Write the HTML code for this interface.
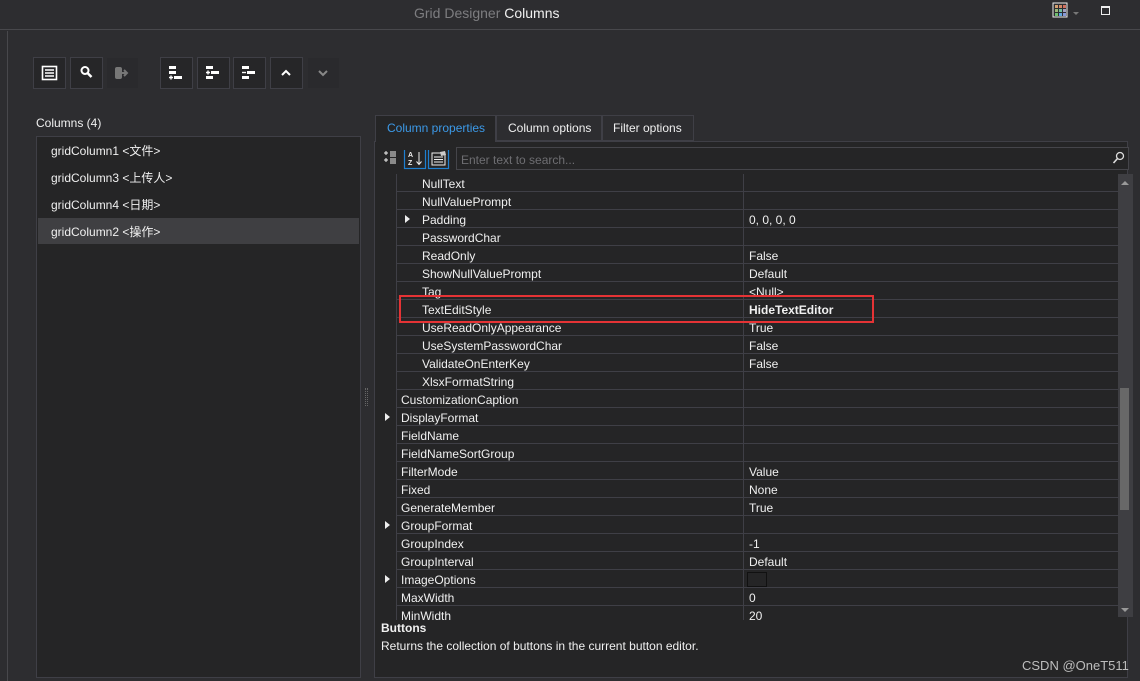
<!DOCTYPE html>
<html><head><meta charset="utf-8"><style>
*{margin:0;padding:0;box-sizing:border-box}
body{width:1140px;height:681px;background:#2d2d30;font-family:"Liberation Sans","Noto Sans CJK SC",sans-serif;font-size:12px;color:#f0f0f0;position:relative;overflow:hidden}
.a{position:absolute}
.btn{position:absolute;top:57px;width:33px;height:32px;border:1px solid #3f3f46;background:#262628}
.row{position:absolute;left:396px;width:722px;height:18px;border-bottom:1px solid #3f3f46;line-height:17px;white-space:nowrap}
.row .n{position:absolute;left:5px;top:2px}
.row.s .n{left:26px}
.row .v{position:absolute;left:353px;top:2px}
.arr{position:absolute;width:0;height:0;border-top:4px solid transparent;border-bottom:4px solid transparent;border-left:5px solid #eee}
</style></head><body>
<div class="a" style="left:0;top:0;width:1140px;height:30px;border-bottom:1px solid #48484c"></div>
<div class="a" style="left:414px;top:5px;font-size:14px;color:#7d7d80">Grid Designer <span style="color:#f0f0f0">Columns</span></div>
<svg class="a" style="left:1052px;top:2px" width="30" height="18"><rect x="1" y="1" width="14" height="14" fill="none" stroke="#eee"/>
<rect x="3" y="3" width="3" height="3" fill="#d4a070"/><rect x="7" y="3" width="3" height="3" fill="#d08a6a"/><rect x="11" y="3" width="3" height="3" fill="#d07060"/>
<rect x="3" y="7" width="3" height="3" fill="#9ab878"/><rect x="7" y="7" width="3" height="3" fill="#70c0a0"/><rect x="11" y="7" width="3" height="3" fill="#a0a0c0"/>
<rect x="3" y="11" width="3" height="3" fill="#70c070"/><rect x="7" y="11" width="3" height="3" fill="#60a8e0"/><rect x="11" y="11" width="3" height="3" fill="#8898d8"/>
<path d="M21 10h6l-3 3z" fill="#777"/></svg>
<div class="a" style="left:1101px;top:6px;width:9px;height:9px;border:1.5px solid #eee;border-top-width:2.5px"></div>
<div class="a" style="left:7px;top:31px;width:1px;height:650px;background:#48484c"></div>

<div class="btn" style="left:33px"><svg width="31" height="30"><rect x="8.5" y="8.5" width="14" height="13" fill="none" stroke="#fff" stroke-width="1.6"/><path d="M11 12h9M11 15h9M11 18h9" stroke="#fff" stroke-width="1.4"/></svg></div>
<div class="btn" style="left:70px"><svg width="31" height="30"><circle cx="14" cy="12.5" r="3.5" fill="none" stroke="#fff" stroke-width="2"/><path d="M16.5 15l4 4" stroke="#fff" stroke-width="2.5"/></svg></div>
<div class="btn" style="left:106px;border-color:#2d2d30;background:#2a2a2d"><svg width="31" height="30"><rect x="8" y="9" width="7" height="12" rx="2" fill="#777"/><path d="M15 15h4M17 12l3 3-3 3" stroke="#777" stroke-width="2" fill="none"/></svg></div>
<div class="btn" style="left:160px"><svg width="31" height="30"><rect x="8" y="8" width="7" height="3" fill="#fff"/><rect x="8" y="13" width="7" height="3" fill="#fff"/><rect x="13" y="18" width="8" height="3" fill="#fff"/><path d="M8 19.5h4M10 17.5v4" stroke="#fff" stroke-width="1.4"/></svg></div>
<div class="btn" style="left:197px"><svg width="31" height="30"><rect x="8" y="8" width="7" height="3" fill="#fff"/><rect x="13" y="13" width="8" height="3" fill="#fff"/><rect x="8" y="18" width="7" height="3" fill="#fff"/><path d="M8 14.5h4M10 12.5v4" stroke="#fff" stroke-width="1.4"/></svg></div>
<div class="btn" style="left:233px"><svg width="31" height="30"><rect x="8" y="8" width="7" height="3" fill="#fff"/><rect x="13" y="13" width="8" height="3" fill="#fff"/><rect x="8" y="18" width="7" height="3" fill="#fff"/><path d="M8 14.5h4" stroke="#fff" stroke-width="1.4"/></svg></div>
<div class="btn" style="left:270px"><svg width="31" height="30"><path d="M11 17l4-4 4 4" stroke="#fff" stroke-width="2" fill="none"/></svg></div>
<div class="btn" style="left:307px;border-color:#2d2d30;background:#2a2a2d"><svg width="31" height="30"><path d="M11 13l4 4 4-4" stroke="#888" stroke-width="2" fill="none"/></svg></div>

<div class="a" style="left:36px;top:116px">Columns (4)</div>
<div class="a" style="left:36px;top:136px;width:325px;height:542px;background:#252526;border:1px solid #3f3f46"></div>
<div class="a" style="left:38px;top:218px;width:321px;height:26px;background:#3f3f42"></div>
<div class="a" style="left:51px;top:144px;line-height:14px">gridColumn1 &lt;文件&gt;</div>
<div class="a" style="left:51px;top:171px;line-height:14px">gridColumn3 &lt;上传人&gt;</div>
<div class="a" style="left:51px;top:198px;line-height:14px">gridColumn4 &lt;日期&gt;</div>
<div class="a" style="left:51px;top:225px;line-height:14px">gridColumn2 &lt;操作&gt;</div>
<div class="a" style="left:365px;top:388px;width:3px;height:18px;border-left:1px dotted #666;border-right:1px dotted #666"></div>

<div class="a" style="left:374px;top:141px;width:754px;height:537px;background:#252526;border:1px solid #3f3f46"></div>
<div class="a" style="left:375px;top:115px;width:121px;height:27px;background:#252526;border:1px solid #3f3f46;border-bottom:none;color:#3c9ae8;line-height:25px;padding-left:11px">Column properties</div>
<div class="a" style="left:496px;top:115px;width:106px;height:26px;border:1px solid #3f3f46;line-height:25px;padding-left:11px">Column options</div>
<div class="a" style="left:602px;top:115px;width:92px;height:26px;border:1px solid #3f3f46;line-height:25px;padding-left:10px">Filter options</div>

<svg class="a" style="left:383px;top:150px" width="70" height="20"><path d="M1 3h4M3 1v4M1 10h4M3 8v4M7 2h6M7 4h6M7 6h6M7 9h6M7 11h6M7 13h6" stroke="#eee" stroke-width="1"/>
<rect x="21.5" y="-1.5" width="21" height="20" fill="none" stroke="#1e7fd0" stroke-width="1.2"/>
<text x="25" y="7" font-size="7" fill="#eee" font-family="Liberation Sans" font-weight="bold">A</text><text x="25" y="15" font-size="7" fill="#eee" font-family="Liberation Sans" font-weight="bold">Z</text><path d="M36 2v12M33.5 11.5l2.5 3 2.5-3" stroke="#eee" fill="none"/>
<rect x="45.5" y="-1.5" width="20" height="20" fill="none" stroke="#1e7fd0" stroke-width="1.2"/>
<rect x="49" y="3" width="13" height="12" fill="none" stroke="#eee"/><path d="M51 7h9M51 9.5h9M51 12h9" stroke="#eee"/><path d="M57 2l5-1 1 4-5 1z" fill="#ccc"/></svg>
<div class="a" style="left:456px;top:147px;width:673px;height:23px;border:1px solid #45454a;background:#252526;color:#6e6e72;line-height:22px;padding-left:4px;padding-top:1px">Enter text to search...</div>
<svg class="a" style="left:1112px;top:151px" width="14" height="14"><circle cx="8" cy="5" r="3.5" fill="none" stroke="#ddd" stroke-width="1.3"/><path d="M5.5 7.5L1.5 12" stroke="#ddd" stroke-width="1.6"/></svg>

<div class="a" style="left:396px;top:174px;width:1px;height:446px;background:#3f3f46"></div>
<div class="row s" style="top:174px"><span class="n">NullText</span></div>
<div class="row s" style="top:192px"><span class="n">NullValuePrompt</span></div>
<div class="row s" style="top:210px"><span class="n">Padding</span><span class="v">0, 0, 0, 0</span></div>
<div class="row s" style="top:228px"><span class="n">PasswordChar</span></div>
<div class="row s" style="top:246px"><span class="n">ReadOnly</span><span class="v">False</span></div>
<div class="row s" style="top:264px"><span class="n">ShowNullValuePrompt</span><span class="v">Default</span></div>
<div class="row s" style="top:282px"><span class="n">Tag</span><span class="v">&lt;Null&gt;</span></div>
<div class="row s" style="top:300px"><span class="n">TextEditStyle</span><span class="v" style="font-weight:bold">HideTextEditor</span></div>
<div class="row s" style="top:318px"><span class="n">UseReadOnlyAppearance</span><span class="v">True</span></div>
<div class="row s" style="top:336px"><span class="n">UseSystemPasswordChar</span><span class="v">False</span></div>
<div class="row s" style="top:354px"><span class="n">ValidateOnEnterKey</span><span class="v">False</span></div>
<div class="row s" style="top:372px"><span class="n">XlsxFormatString</span></div>
<div class="row" style="top:390px"><span class="n">CustomizationCaption</span></div>
<div class="row" style="top:408px"><span class="n">DisplayFormat</span></div>
<div class="row" style="top:426px"><span class="n">FieldName</span></div>
<div class="row" style="top:444px"><span class="n">FieldNameSortGroup</span></div>
<div class="row" style="top:462px"><span class="n">FilterMode</span><span class="v">Value</span></div>
<div class="row" style="top:480px"><span class="n">Fixed</span><span class="v">None</span></div>
<div class="row" style="top:498px"><span class="n">GenerateMember</span><span class="v">True</span></div>
<div class="row" style="top:516px"><span class="n">GroupFormat</span></div>
<div class="row" style="top:534px"><span class="n">GroupIndex</span><span class="v">-1</span></div>
<div class="row" style="top:552px"><span class="n">GroupInterval</span><span class="v">Default</span></div>
<div class="row" style="top:570px"><span class="n">ImageOptions</span><span class="a" style="left:351px;top:2px;width:20px;height:15px;border:1px solid #111"></span></div>
<div class="row" style="top:588px"><span class="n">MaxWidth</span><span class="v">0</span></div>
<div class="a" style="left:396px;top:606px;width:722px;height:14px;overflow:hidden"><div class="row" style="left:0;top:0;border:none"><span class="n">MinWidth</span><span class="v">20</span></div></div>
<div class="a" style="left:743px;top:174px;width:1px;height:446px;background:#3f3f46"></div>
<div class="arr" style="left:405px;top:215px"></div>
<div class="arr" style="left:385px;top:413px"></div>
<div class="arr" style="left:385px;top:521px"></div>
<div class="arr" style="left:385px;top:575px"></div>

<div class="a" style="left:1118px;top:174px;width:15px;height:443px;background:#3e3e42"></div>
<div class="a" style="left:1120px;top:388px;width:9px;height:122px;background:#686868"></div>
<svg class="a" style="left:1118px;top:176px" width="15" height="440"><path d="M3 9h8l-4-4z" fill="#999"/><path d="M3 432h8l-4 4z" fill="#999"/></svg>

<div class="a" style="left:399px;top:295px;width:475px;height:28px;border:2px solid #e53335"></div>

<div class="a" style="left:381px;top:621px;font-weight:bold">Buttons</div>
<div class="a" style="left:381px;top:639px">Returns the collection of buttons in the current button editor.</div>
<div class="a" style="left:1022px;top:658px;color:#bdbdbd;font-size:13px">CSDN @OneT511</div>
</body></html>
